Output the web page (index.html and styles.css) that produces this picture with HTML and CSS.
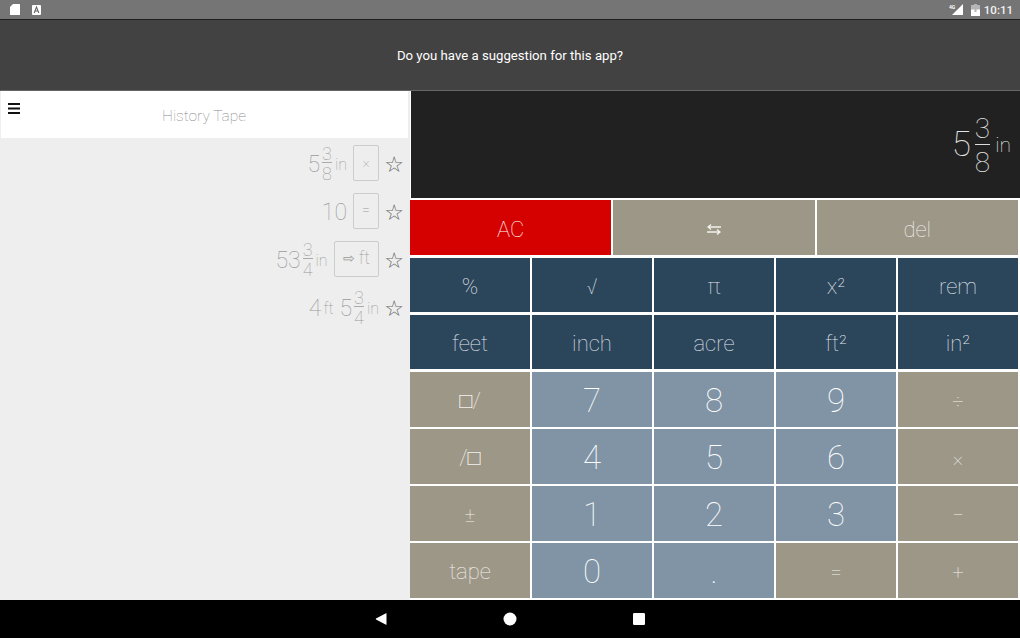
FILE: index.html
```
<!DOCTYPE html>
<html lang="en">
<head>
<meta charset="utf-8">
<title>Calculator</title>
<link rel="stylesheet" href="styles.css">
</head>
<body>
<div class="status">
  <div class="status-left">
    <svg class="ic" width="10" height="11" viewBox="0 0 10 11"><path d="M3 0H9.5Q10 0 10 .5V10.5Q10 11 9.5 11H.5Q0 11 0 10.5V3Z" fill="#fff"/></svg>
    <svg class="ic" width="9" height="10" viewBox="0 0 9 10"><rect width="9" height="10" rx="1" fill="#fff"/><path d="M2.2 8L4.5 2L6.8 8M3 6H6" fill="none" stroke="#666" stroke-width="1.1"/></svg>
  </div>
  <div class="status-right">
    <svg width="14" height="12" viewBox="0 0 14 12"><path d="M14 0V11H3Z" fill="#fff"/><text x="0" y="5" class="lte">4G</text></svg>
    <svg width="9" height="12" viewBox="0 0 9 12"><path d="M3 0H6V1H9V12H0V1H3Z" fill="#b5b5b5"/><path d="M0 5.5H3.5V8H5.5V5.5H9V12H0Z" fill="#fff"/></svg>
    <span class="clock">10:11</span>
  </div>
</div>
<div class="banner">Do you have a suggestion for this app?</div>
<main class="app">
  <section class="tape">
    <header class="tape-head">
      <svg class="burger" width="12" height="11" viewBox="0 0 12 11"><path d="M0 1H12M0 5.5H12M0 10H12" stroke="#111" stroke-width="2"/></svg>
      <span class="tape-title">History Tape</span>
    </header>
    <div class="entries">
      <div class="entry">
        <span class="num">5</span><span class="frac"><span>3</span><span>8</span></span><span class="unit">in</span>
        <span class="opbox"><span class="opsym">×</span></span><span class="star">☆</span>
      </div>
      <div class="entry">
        <span class="num">10</span>
        <span class="opbox"><span class="opsym">=</span></span><span class="star">☆</span>
      </div>
      <div class="entry">
        <span class="num">53</span><span class="frac"><span>3</span><span>4</span></span><span class="unit">in</span>
        <span class="opbox"><span class="opsym">⇨</span><span class="opft">ft</span></span><span class="star">☆</span>
      </div>
      <div class="entry">
        <span class="num">4</span><span class="unit unit-ft">ft</span><span class="num">5</span><span class="frac"><span>3</span><span>4</span></span><span class="unit">in</span>
        <span class="star">☆</span>
      </div>
    </div>
  </section>
  <section class="calc">
    <div class="display">
      <span class="d-num">5</span><span class="d-frac"><span>3</span><span>8</span></span><span class="d-unit">in</span>
    </div>
    <div class="top-row">
      <button class="key red">AC</button>
      <button class="key taupe"><svg width="14" height="11" viewBox="0 0 14 11"><path d="M14 3H1.5M4 .5L1 3L4 5.5M0 8H12.5M10 5.5L13 8L10 10.5" fill="none" stroke="#f2f1ec" stroke-width="1.3"/></svg></button>
      <button class="key taupe">del</button>
    </div>
    <div class="keys">
      <button class="key navy">%</button>
      <button class="key navy">√</button>
      <button class="key navy">π</button>
      <button class="key navy">x²</button>
      <button class="key navy">rem</button>
      <button class="key navy">feet</button>
      <button class="key navy">inch</button>
      <button class="key navy">acre</button>
      <button class="key navy">ft²</button>
      <button class="key navy">in²</button>
      <button class="key taupe">□/</button>
      <button class="key steel big">7</button>
      <button class="key steel big">8</button>
      <button class="key steel big">9</button>
      <button class="key taupe op">÷</button>
      <button class="key taupe">/□</button>
      <button class="key steel big">4</button>
      <button class="key steel big">5</button>
      <button class="key steel big">6</button>
      <button class="key taupe op">×</button>
      <button class="key taupe op">±</button>
      <button class="key steel big">1</button>
      <button class="key steel big">2</button>
      <button class="key steel big">3</button>
      <button class="key taupe op">−</button>
      <button class="key taupe">tape</button>
      <button class="key steel big">0</button>
      <button class="key steel big">.</button>
      <button class="key taupe op">=</button>
      <button class="key taupe op">+</button>
    </div>
  </section>
</main>
<nav class="navbar">
  <svg width="14" height="14" viewBox="0 0 14 14"><path d="M12.5 1.5V12.5Q12.5 13 12 12.7L2 7.5Q1.5 7 2 6.5L12 1.2Q12.5 1 12.5 1.5Z" fill="#fff"/></svg>
  <svg width="14" height="14" viewBox="0 0 14 14"><circle cx="7" cy="7" r="6.5" fill="#fff"/></svg>
  <svg width="14" height="14" viewBox="0 0 14 14"><rect x="1" y="1" width="12" height="12" rx="1.2" fill="#fff"/></svg>
</nav>
</body>
</html>
```
FILE: styles.css
```
* { box-sizing: border-box; }
html, body { margin: 0; padding: 0; }
body {
  width: 1020px;
  height: 638px;
  overflow: hidden;
  display: flex;
  flex-direction: column;
  font-family: Roboto, "Liberation Sans", sans-serif;
  background: #000;
}
.status {
  height: 20px;
  flex: none;
  background: #757575;
  border-bottom: 1px solid #1e1e1e;
  display: flex;
  justify-content: space-between;
  align-items: center;
  padding: 0 7px 0 10px;
}
.status-left { display: flex; align-items: center; gap: 12px; }
.status-right { display: flex; align-items: center; gap: 8px; }
.ic { display: block; }
.lte { font: 700 5px Roboto, sans-serif; fill: #fff; }
.clock { font-size: 11.5px; font-weight: 500; color: #f2f2f2; margin-left: -4px; }
.banner {
  height: 71px;
  flex: none;
  background: #424242;
  border-bottom: 1px solid #666;
  color: #fff;
  font-size: 13.2px;
  display: flex;
  align-items: center;
  justify-content: center;
}
.app {
  flex: 1;
  min-height: 0;
  display: flex;
  background: #eee;
}
.tape {
  width: 410px;
  flex: none;
  display: flex;
  flex-direction: column;
  color: #9a9a9a;
  font-weight: 100;
}
.tape-head {
  height: 47px;
  margin: 0 2px 0 1px;
  background: #fff;
  display: flex;
  align-items: center;
  font-size: 15.5px;
}
.burger { margin: -13px 0 0 7px; }
.tape-title { margin: 2px 0 0 142px; color: #888; }
.entries {
  display: flex;
  flex-direction: column;
  gap: 12px;
  padding: 7px 8px 0 0;
}
.entry {
  height: 36px;
  display: flex;
  justify-content: flex-end;
  align-items: center;
}
.num { font-size: 23px; line-height: 1; padding-top: 3px; }
.frac {
  display: inline-flex;
  flex-direction: column;
  align-items: center;
  font-size: 18px;
  line-height: 18px;
  margin-left: 2px;
}
.frac span { height: 18px; padding-top: 1px; }
.frac span:first-child { border-bottom: 1px solid #aaa; padding: 0; margin-bottom: 1px; }
.unit { font-size: 16px; margin: 2px 0 0 3px; }
.unit-ft { margin: 2px 6px 0 2px; }
.opbox {
  height: 36px;
  min-width: 26px;
  margin-left: 6px;
  padding: 0 8px;
  border: 1px solid #ccc;
  border-radius: 2px;
  display: flex;
  align-items: center;
  justify-content: center;
  gap: 4px;
  font-size: 14px;
}
.opsym { font-size: 14px; margin-top: -2px; }
.opft { font-size: 18px; margin-top: -4px; }
.star { width: 16px; margin: 4px 0 0 7px; font: 22px "DejaVu Sans", sans-serif; color: #666; line-height: 1; display: flex; justify-content: center; }
.calc {
  width: 610px;
  flex: none;
  display: flex;
  flex-direction: column;
  background: #fff;
}
.display {
  height: 107px;
  flex: none;
  margin-left: 1px;
  background: #212121;
  color: #e4e4e4;
  font-weight: 100;
  display: flex;
  justify-content: flex-end;
  align-items: center;
  padding: 0 9px 0 0;
}
.d-num { font-size: 35px; }
.d-frac {
  display: inline-flex;
  flex-direction: column;
  align-items: center;
  font-size: 28px;
  line-height: 32px;
  margin: 0 5px 0 4px;
}
.d-frac span { height: 34px; padding-top: 2px; }
.d-frac span:first-child { border-bottom: 1px solid #ddd; }
.d-unit { font-size: 21px; }
.top-row {
  display: grid;
  grid-template-columns: repeat(3, 1fr);
  gap: 2px;
  margin: 2.4px 2px 0 0;
  height: 54.7px;
  flex: none;
}
.keys {
  display: grid;
  grid-template-columns: repeat(5, 1fr);
  grid-template-rows: repeat(6, 54.7px);
  gap: 2.4px 2px;
  margin: 2.6px 2px 0 0;
}
.key {
  border: 0;
  margin: 0;
  padding: 3px 0 0;
  font-family: inherit;
  font-weight: 100;
  font-size: 22px;
  color: #eef0f2;
  display: flex;
  align-items: center;
  justify-content: center;
}
.red { background: #d50000; color: #fff; }
.taupe { background: #9d9787; color: #f2f1ec; }
.navy { background: #2b455b; color: #e2e8ee; }
.steel { background: #8094a5; color: #fff; }
.big { font-size: 33px; }
.op { font-size: 20px; }
.navbar {
  height: 38px;
  flex: none;
  background: #000;
  display: flex;
  justify-content: center;
  align-items: center;
  gap: 115px;
}
```
